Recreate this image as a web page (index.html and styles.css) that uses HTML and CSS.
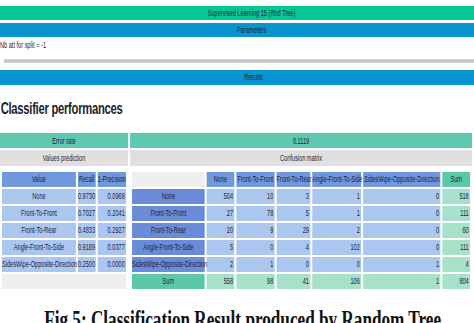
FILE: index.html
```html
<!DOCTYPE html>
<html>
<head>
<meta charset="utf-8">
<link rel="stylesheet" href="styles.css">
</head>
<body>
<div class="page">
  <div class="bar bar-green">Supervised Learning 15 (Rnd Tree)</div>
  <div class="bar bar-blue">Parameters</div>
  <p class="param">Nb att for split = -1</p>
  <div class="sep"></div>
  <div class="bar bar-blue results">Results</div>
  <h2 class="title">Classifier performances</h2>
  <div class="perf">
    <div class="head-cell teal">Error rate</div>
    <div class="head-cell teal">0.1119</div>
    <div class="head-cell grey">Values prediction</div>
    <div class="head-cell grey">Confusion matrix</div>
    <div class="inner">
      <table class="vals">
        <colgroup><col class="w-value"><col class="w-recall"><col class="w-prec"></colgroup>
        <tr><td class="hd">Value</td><td class="hd">Recall</td><td class="hd">1-Precision</td></tr>
        <tr><td class="dv">None</td><td class="dv num">0.9730</td><td class="dv num">0.0968</td></tr>
        <tr><td class="dv">Front-To-Front</td><td class="dv num">0.7027</td><td class="dv num">0.2041</td></tr>
        <tr><td class="dv">Front-To-Rear</td><td class="dv num">0.4833</td><td class="dv num">0.2927</td></tr>
        <tr><td class="dv">Angle-Front-To-Side</td><td class="dv num">0.9189</td><td class="dv num">0.0377</td></tr>
        <tr><td class="dv">SidesWipe-Opposite-Direction</td><td class="dv num">0.2500</td><td class="dv num">0.0000</td></tr>
        <tr><td class="empty" colspan="3"></td></tr>
      </table>
    </div>
    <div class="inner">
      <table class="matrix">
        <colgroup><col class="w-label"><col class="w-none"><col class="w-ftf"><col class="w-ftr"><col class="w-ang"><col class="w-sides"><col class="w-sum"></colgroup>
        <tr><td class="empty"></td><td class="hd">None</td><td class="hd">Front-To-Front</td><td class="hd">Front-To-Rear</td><td class="hd">Angle-Front-To-Side</td><td class="hd">SidesWipe-Opposite-Direction</td><td class="sum-h">Sum</td></tr>
        <tr><td class="lb">None</td><td class="dv num">504</td><td class="dv num">10</td><td class="dv num">3</td><td class="dv num">1</td><td class="dv num">0</td><td class="sum-d num">518</td></tr>
        <tr><td class="lb">Front-To-Front</td><td class="dv num">27</td><td class="dv num">78</td><td class="dv num">5</td><td class="dv num">1</td><td class="dv num">0</td><td class="sum-d num">111</td></tr>
        <tr><td class="lb">Front-To-Rear</td><td class="dv num">20</td><td class="dv num">9</td><td class="dv num">29</td><td class="dv num">2</td><td class="dv num">0</td><td class="sum-d num">60</td></tr>
        <tr><td class="lb">Angle-Front-To-Side</td><td class="dv num">5</td><td class="dv num">0</td><td class="dv num">4</td><td class="dv num">102</td><td class="dv num">0</td><td class="sum-d num">111</td></tr>
        <tr><td class="lb">SidesWipe-Opposite-Direction</td><td class="dv num">2</td><td class="dv num">1</td><td class="dv num">0</td><td class="dv num">0</td><td class="dv num">1</td><td class="sum-d num">4</td></tr>
        <tr><td class="sum-h">Sum</td><td class="sum-d num">558</td><td class="sum-d num">98</td><td class="sum-d num">41</td><td class="sum-d num">106</td><td class="sum-d num">1</td><td class="sum-d num">804</td></tr>
      </table>
    </div>
  </div>
  <p class="caption">Fig 5: Classification Result produced by Random Tree</p>
</div>
</body>
</html>
```
FILE: styles.css
```css
html, body {
  margin: 0;
  padding: 0;
  background: #ffffff;
  overflow: hidden;
}

.page {
  width: 718px;
  padding-top: 6px;
  transform: scaleX(0.6602);
  transform-origin: 0 0;
  font-family: "Liberation Sans", Arial, sans-serif;
  color: #1c2340;
}

.bar {
  height: 14px;
  line-height: 14px;
  font-size: 8.5px;
  text-align: center;
  padding-left: 44px;
}

.bar-green {
  background: #03c896;
}

.bar-blue {
  background: #0895cf;
  margin-top: 3px;
}

.results {
  margin-top: 7px;
  height: 15px;
  line-height: 15px;
  padding-left: 50px;
}

.param {
  margin: 2px 0 0;
  line-height: 12px;
  font-size: 8.5px;
}

.sep {
  margin: 8px 0 0 6px;
  height: 4px;
  background: linear-gradient(#dedede, #bdbdbd 50%, #d6d6d6);
}

.title {
  margin: 14px 0 0 1px;
  font-size: 17px;
  line-height: 20px;
  font-weight: 700;
  letter-spacing: -0.4px;
  color: #20232e;
}

.perf {
  margin-top: 14px;
  width: 715px;
  display: grid;
  grid-template-columns: 194px 1fr;
  grid-template-rows: 15px 16px auto;
  gap: 2px 3px;
  font-size: 8.5px;
}

.head-cell {
  display: flex;
  align-items: center;
  justify-content: center;
}

.teal {
  background: #5ec8b0;
}

.grey {
  background: #e0e0e0;
}

.inner {
  padding-top: 2px;
}

.vals,
.matrix {
  border-collapse: separate;
  border-spacing: 3px 2px;
  table-layout: fixed;
  font-size: 8.5px;
}

.vals {
  width: 194px;
}

.matrix {
  width: 518px;
}

.vals td,
.matrix td {
  height: 15px;
  padding: 0;
  line-height: 15px;
  white-space: nowrap;
  text-align: center;
  color: #1a2040;
}

.w-value { width: 112px; }
.w-recall { width: 27px; }
.w-prec { width: 43px; }

.w-label { width: 110px; }
.w-none { width: 42px; }
.w-ftf { width: 58px; }
.w-ftr { width: 51px; }
.w-ang { width: 74px; }
.w-sides { width: 117px; }
.w-sum { width: 42px; }

.hd {
  background: #7098dc;
}

.lb {
  background: #6a8bd8;
}

.dv {
  background: #abc7f0;
}

.vals td.num,
.matrix td.num {
  text-align: right;
  padding-right: 2px;
}

.sum-h {
  background: #5cc8a7;
}

.sum-d {
  background: #a7e1c9;
}

.empty {
  background: #efefef;
}

.caption {
  margin: 14px 0 0;
  padding-left: 17px;
  text-align: center;
  font-family: "Liberation Serif", "Times New Roman", serif;
  font-weight: 700;
  font-size: 26px;
  line-height: 30px;
  color: #111111;
  white-space: nowrap;
}
```
